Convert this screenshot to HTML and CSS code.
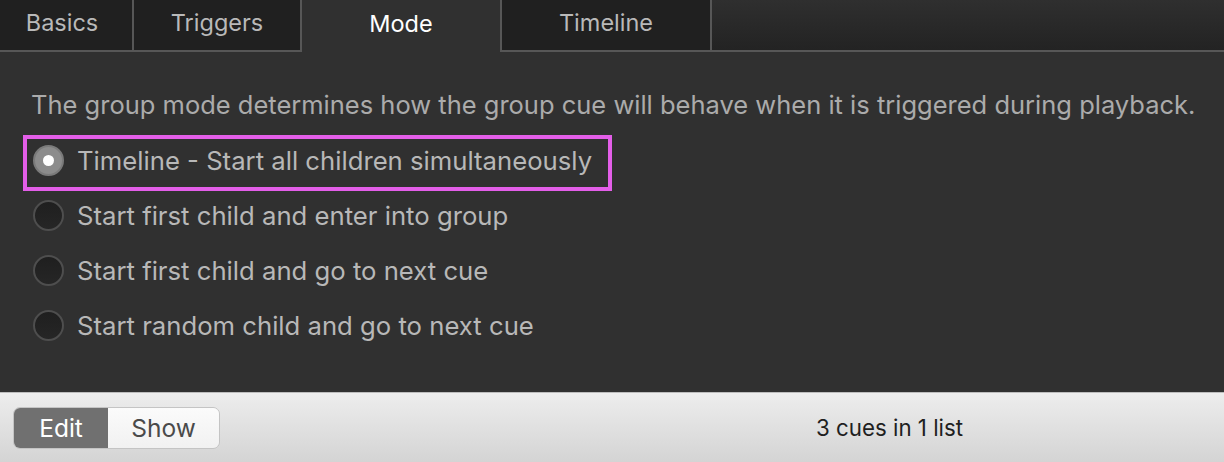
FILE: index.html
```html
<!DOCTYPE html>
<html>
<head>
<meta charset="utf-8">
<link rel="stylesheet" href="styles.css">
</head>
<body>
<div class="window">
  <div class="tabs">
    <div class="tab t-basics">Basics</div>
    <div class="tab t-triggers">Triggers</div>
    <div class="tab t-mode active">Mode</div>
    <div class="tab t-timeline">Timeline</div>
  </div>
  <div class="content">
    <p class="desc">The group mode determines how the group cue will behave when it is triggered during playback.</p>
    <div class="options">
      <div class="row selected highlight"><span class="radio"></span><span class="label">Timeline - Start all children simultaneously</span></div>
      <div class="row"><span class="radio"></span><span class="label">Start first child and enter into group</span></div>
      <div class="row"><span class="radio"></span><span class="label">Start first child and go to next cue</span></div>
      <div class="row"><span class="radio"></span><span class="label">Start random child and go to next cue</span></div>
    </div>
  </div>
  <div class="statusbar">
    <div class="segmented">
      <div class="seg seg-on">Edit</div>
      <div class="seg seg-off">Show</div>
    </div>
    <div class="status">3 cues in 1 list</div>
  </div>
</div>
</body>
</html>
```

FILE: styles.css
```css
html, body {
  margin: 0;
  padding: 0;
}
body {
  width: 1224px;
  height: 462px;
  overflow: hidden;
  background: #303030;
  font-family: "Inter", "Noto Sans", sans-serif;
}
.window {
  display: flex;
  flex-direction: column;
  height: 462px;
}
.tabs {
  display: flex;
  height: 50px;
  border-bottom: 2px solid #575757;
  background: linear-gradient(180deg, #2f2f2f 0%, #232323 100%);
  flex: none;
}
.tab {
  display: flex;
  align-items: center;
  justify-content: center;
  border-right: 2px solid #575757;
  background: #202020;
  color: #b9b9b9;
  font-size: 23.5px;
  padding-bottom: 6px;
  box-sizing: border-box;
}
.t-basics { width: 134px; padding-right: 8px; }
.t-triggers { width: 168px; }
.t-mode { width: 200px; }
.t-timeline { width: 210px; }
.tab.active {
  background: #303030;
  color: #ffffff;
  margin-bottom: -2px;
}
.content {
  flex: 1;
  padding-top: 38px;
  padding-left: 31px;
  background: #303030;
}
.desc {
  margin: 0;
  height: 30px;
  line-height: 30px;
  font-size: 25.5px;
  color: #ababab;
  white-space: nowrap;
}
.options {
  margin-top: 13px;
  margin-left: -31px;
  display: flex;
  flex-direction: column;
}
.row {
  position: relative;
  height: 55px;
  display: flex;
  align-items: center;
  padding-left: 33px;
  gap: 13px;
}
.radio {
  width: 27px;
  height: 27px;
  border-radius: 50%;
  border: 2px solid #4e4e4e;
  background: linear-gradient(180deg, #1f1f1f, #262626);
  flex: none;
  position: relative;
}
.row.selected .radio {
  background: #8c8c8c;
  border-color: #7a7a7a;
}
.row.selected .radio::after {
  content: "";
  position: absolute;
  width: 11px;
  height: 11px;
  border-radius: 50%;
  background: #ffffff;
  left: 8px;
  top: 8px;
}
.label {
  font-size: 25.7px;
  color: #b8b8b8;
  white-space: nowrap;
}
.row.highlight::before {
  content: "";
  position: absolute;
  left: 23px;
  top: 2px;
  width: 581px;
  height: 48px;
  border: 4px solid #e35ee8;
}
.statusbar {
  flex: none;
  height: 69px;
  border-top: 1px solid #bdbdbd;
  background: linear-gradient(180deg, #ededed 0%, #d4d4d4 100%);
  display: flex;
  align-items: center;
  padding-left: 13px;
}
.segmented {
  display: flex;
  height: 42px;
  border-radius: 7px;
  overflow: hidden;
  border: 1px solid #c4c4c4;
  box-sizing: border-box;
  margin-top: 1px;
}
.seg {
  display: flex;
  align-items: center;
  justify-content: center;
  font-size: 24.5px;
}
.seg-on {
  width: 94px;
  background: #707070;
  color: #ffffff;
}
.seg-off {
  width: 111px;
  background: linear-gradient(180deg, #fbfbfb, #f1f1f1);
  color: #4a4a4a;
}
.status {
  margin-left: 596px;
  font-size: 22.3px;
  color: #1f1f1f;
  white-space: nowrap;
}
```
